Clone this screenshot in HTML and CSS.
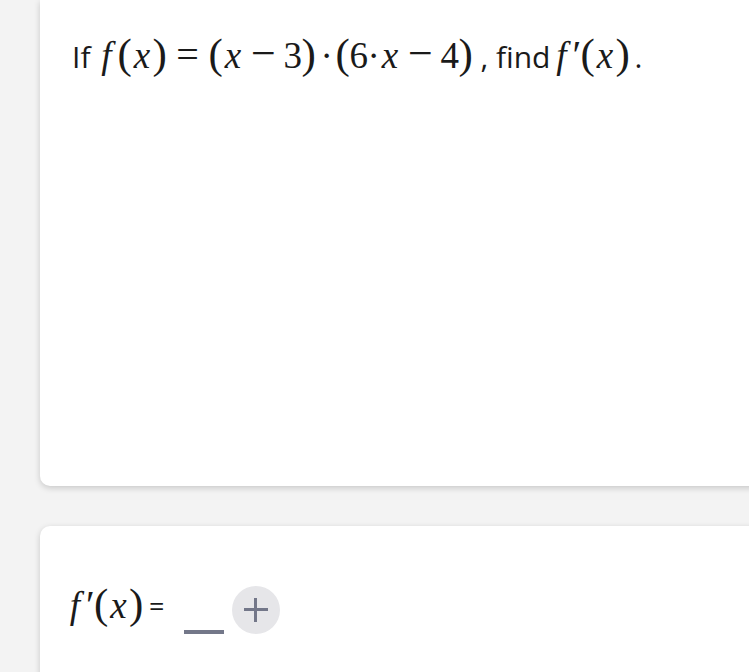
FILE: index.html
```html
<!DOCTYPE html>
<html>
<head>
<meta charset="utf-8">
<link rel="stylesheet" href="styles.css">
</head>
<body>
<div class="page">
  <div class="card card-question">
    <div class="question">
      <span class="txt">If</span>
      <span class="math m1">
        <span class="t t-f">f</span><span class="t t-p">(</span><span class="t t-x">x</span><span class="t t-p">)</span><span class="t t-op rel">=</span><span class="t t-p">(</span><span class="t t-x">x</span><span class="t t-op bin">&minus;</span><span class="t t-d">3</span><span class="t t-p">)</span><span class="t t-dot">&middot;</span><span class="t t-p">(</span><span class="t t-d">6</span><span class="t t-dot tight">&middot;</span><span class="t t-x">x</span><span class="t t-op bin">&minus;</span><span class="t t-d">4</span><span class="t t-p">)</span>
      </span>
      <span class="txt comma">, find</span>
      <span class="math m2">
        <span class="t t-f">f</span><span class="t t-pr">&prime;</span><span class="t t-p">(</span><span class="t t-x">x</span><span class="t t-p">)</span>
      </span>
      <span class="txt period">.</span>
    </div>
  </div>
  <div class="card card-answer">
    <div class="answer-row">
      <span class="math m3">
        <span class="t t-f">f</span><span class="t t-pr">&prime;</span><span class="t t-p">(</span><span class="t t-x">x</span><span class="t t-p">)</span>
      </span>
      <span class="txt eq">=</span>
      <span class="blank"></span>
      <span class="plus"></span>
    </div>
  </div>
</div>
</body>
</html>
```
FILE: styles.css
```css
html, body {
  margin: 0;
  padding: 0;
  background: #f3f3f3;
  overflow: hidden;
}
.page {
  padding-left: 40px;
  display: flex;
  flex-direction: column;
  gap: 40px;
}
.card {
  background: #ffffff;
  margin-right: -20px;
  box-shadow: 0 2px 6px rgba(0,0,0,0.18);
}
.card-question {
  height: 486px;
  border-radius: 0 0 10px 10px;
  box-sizing: border-box;
  padding: 28px 0 0 32px;
}
.card-answer {
  height: 160px;
  border-radius: 10px 10px 0 0;
  box-sizing: border-box;
  padding: 52px 0 0 26px;
}
.question {
  display: flex;
  align-items: baseline;
  white-space: nowrap;
  line-height: 52px;
}
.txt {
  font-family: "Open Sans", "Noto Sans", sans-serif;
  font-size: 30px;
  color: #1a1a1a;
}
.math {
  display: inline-flex;
  align-items: baseline;
  font-family: "Liberation Serif", "DejaVu Serif", serif;
  font-size: 37px;
  color: #1a1a1a;
}
.m1 {
  margin-left: 7px;
}
.m2 {
  margin-left: 2px;
}
.t {
  display: inline-block;
  text-align: center;
  font-style: normal;
}
.t-f {
  width: 18px;
  margin-right: 2px;
  font-style: italic;
}
.t-x {
  width: 21px;
  font-style: italic;
}
.t-p {
  width: 14px;
  font-size: 43px;
}
.t-d {
  width: 18px;
}
.t-op {
  width: 28px;
  font-size: 44px;
}
.rel {
  font-size: 40px;
  margin: 0 7px 0 7px;
}
.bin {
  margin: 0 6px;
}
.t-dot {
  width: 10px;
  margin: 0 5px;
}
.t-dot.tight {
  margin: 0 2px 0 0;
}
.t-pr {
  width: 8px;
  font-size: 40px;
}
.comma {
  margin-left: 8px;
}
.period {
  margin-left: 5px;
}
.answer-row {
  display: flex;
  align-items: flex-end;
  line-height: 52px;
}
.m3 {
  margin-bottom: 2px;
}
.eq {
  margin-left: 6px;
  margin-bottom: 2px;
  font-size: 27px;
}
.blank {
  width: 40px;
  height: 4px;
  background: #737789;
  margin-left: 20px;
}
.plus {
  position: relative;
  width: 48px;
  height: 48px;
  border-radius: 50%;
  background: #e6e6e9;
  margin-left: 8px;
}
.plus::before, .plus::after {
  content: "";
  position: absolute;
  background: #737789;
}
.plus::before {
  left: 12px;
  top: 22px;
  width: 24px;
  height: 3px;
}
.plus::after {
  left: 22px;
  top: 12px;
  width: 3px;
  height: 24px;
}
```
